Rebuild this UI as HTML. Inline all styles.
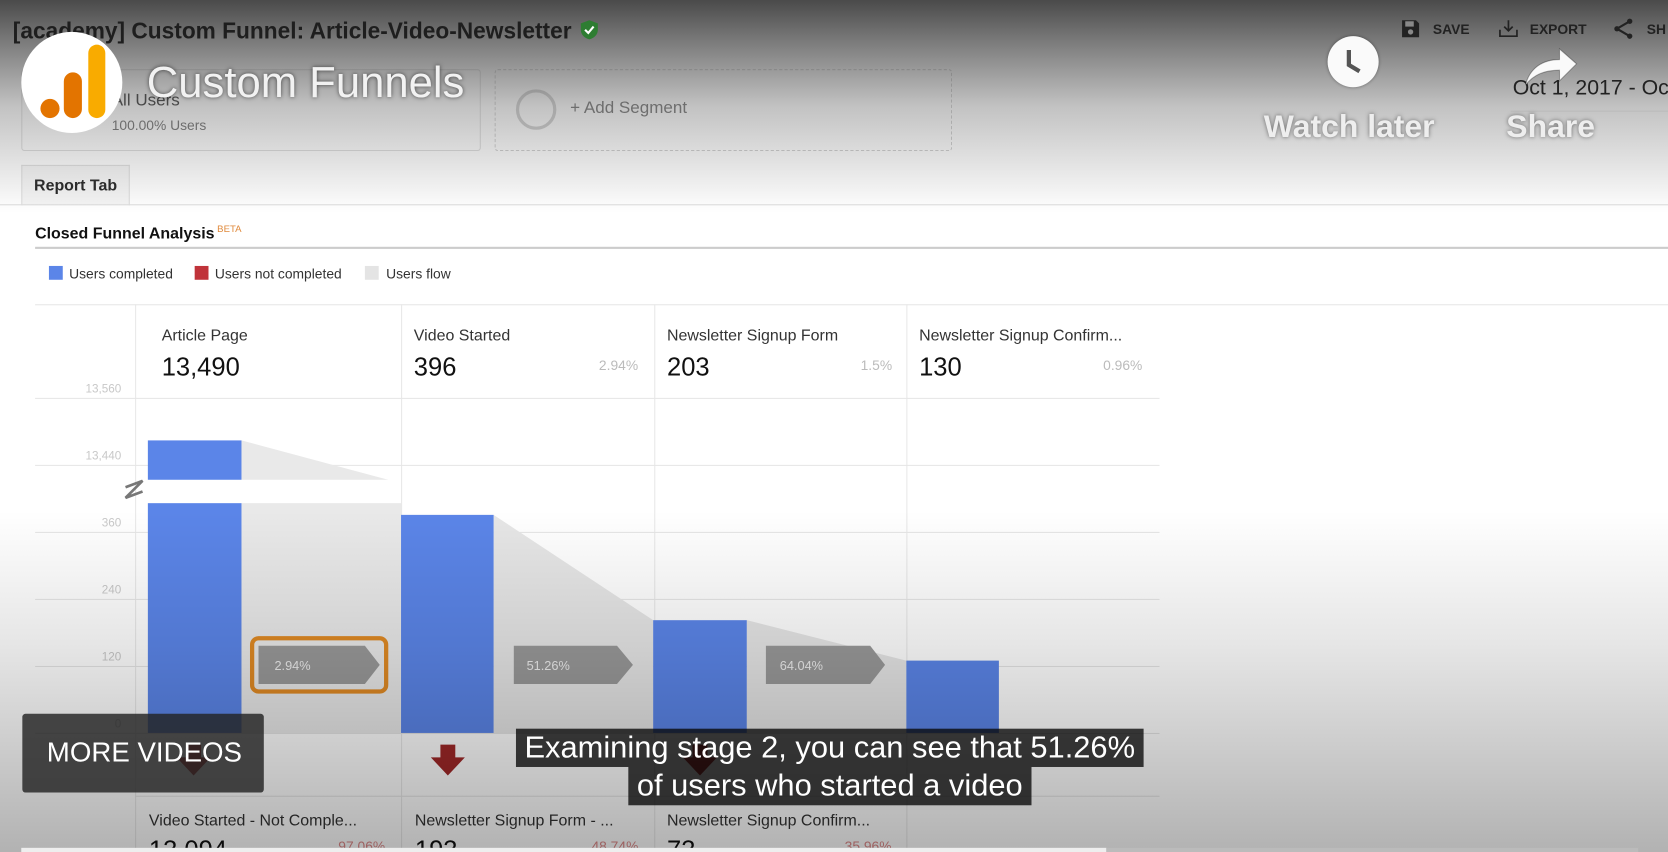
<!DOCTYPE html>
<html><head><meta charset="utf-8"><style>
html,body{margin:0;padding:0;width:1668px;height:852px;overflow:hidden;background:#fff;font-family:"Liberation Sans",sans-serif}
#w{position:absolute;left:0;top:0;width:1568px;height:801px;transform:scale(1.06378);transform-origin:0 0;background:#fff;overflow:hidden}
.a{position:absolute;white-space:nowrap}
.hl{position:absolute;height:1px;background:#e6e6e6}
.vl{position:absolute;width:1px;background:#e8e8e8}
.bar{position:absolute;background:#5b85e8}
.yl{position:absolute;width:80px;text-align:right;font-size:11px;color:#c8c8c8;left:34px}
.hn{font-size:15px;color:#333}
.hv{font-size:24px;color:#111}
.hp{font-size:13px;color:#bbb}
.cap{position:absolute;background:rgba(8,8,8,.78);color:#fff;font-size:29px;line-height:36px;padding:0 8px;white-space:nowrap;transform:translateX(-50%)}
</style></head><body><div id="w">
<div class="a" style="left:20px;top:65px;width:430px;height:75px;border:1px solid #ddd;border-radius:3px"></div>
<div class="a" style="left:105px;top:86px;font-size:16px;color:#222">All Users</div>
<div class="a" style="left:105px;top:110px;font-size:13px;color:#666">100.00% Users</div>
<div class="a" style="left:465px;top:65px;width:428px;height:75px;border:1px dashed #ccc;border-radius:3px"></div>
<div class="a" style="left:485px;top:84px;width:32px;height:32px;border:3px solid #ccc;border-radius:50%"></div>
<div class="a" style="left:536px;top:93px;font-size:16px;color:#666">+ Add Segment</div>
<div class="a" style="left:20px;top:155px;width:100px;height:37px;border:1px solid #ddd;border-bottom:none;background:#f5f5f5"></div>
<div class="a" style="left:32px;top:166px;font-size:15px;font-weight:bold;color:#222">Report Tab</div>
<div class="hl" style="left:0;top:192px;width:1568px;background:#ddd"></div>
<div class="a" style="left:33px;top:210px;font-size:15px;font-weight:bold;color:#111">Closed Funnel Analysis<sup style="font-size:9px;color:#e08a3c;font-weight:normal"> BETA</sup></div>
<div class="hl" style="left:33px;top:232px;width:1535px;height:2px;background:#ccc"></div>
<div class="a" style="left:46px;top:250px;width:13px;height:13px;background:#5b85e8"></div>
<div class="a" style="left:65px;top:250px;font-size:13px;color:#333">Users completed</div>
<div class="a" style="left:183px;top:250px;width:13px;height:13px;background:#c0333a"></div>
<div class="a" style="left:202px;top:250px;font-size:13px;color:#333">Users not completed</div>
<div class="a" style="left:343px;top:250px;width:13px;height:13px;background:#e4e4e4"></div>
<div class="a" style="left:363px;top:250px;font-size:13px;color:#333">Users flow</div>
<div class="hl" style="left:33px;top:286px;width:1535px"></div>
<div class="vl" style="left:127px;top:286px;height:515px"></div>
<div class="vl" style="left:377px;top:286px;height:515px"></div>
<div class="vl" style="left:615px;top:286px;height:515px"></div>
<div class="vl" style="left:852px;top:286px;height:515px"></div>
<div class="hl" style="left:33px;top:374px;width:1057px"></div>
<div class="hl" style="left:33px;top:437px;width:1057px"></div>
<div class="hl" style="left:33px;top:500px;width:1057px"></div>
<div class="hl" style="left:33px;top:563px;width:1057px"></div>
<div class="hl" style="left:33px;top:626px;width:1057px"></div>
<div class="hl" style="left:33px;top:689px;width:1057px"></div>
<div class="hl" style="left:127px;top:748px;width:963px"></div>
<div class="yl" style="top:360px">13,560</div>
<div class="yl" style="top:423px">13,440</div>
<div class="yl" style="top:486px">360</div>
<div class="yl" style="top:549px">240</div>
<div class="yl" style="top:612px">120</div>
<div class="yl" style="top:675px">0</div>
<div class="a hn" style="left:152px;top:307px">Article Page</div>
<div class="a hv" style="left:152px;top:332px">13,490</div>
<div class="a hn" style="left:389px;top:307px">Video Started</div>
<div class="a hv" style="left:389px;top:332px">396</div>
<div class="a hp" style="left:563px;top:336px">2.94%</div>
<div class="a hn" style="left:627px;top:307px">Newsletter Signup Form</div>
<div class="a hv" style="left:627px;top:332px">203</div>
<div class="a hp" style="left:809px;top:336px">1.5%</div>
<div class="a hn" style="left:864px;top:307px">Newsletter Signup Confirm...</div>
<div class="a hv" style="left:864px;top:332px">130</div>
<div class="a hp" style="left:1037px;top:336px">0.96%</div>
<svg class="a" style="left:0;top:0" width="1568" height="801">
<polygon points="227,414 365,451 227,451" fill="#e9e9e9"/>
<polygon points="227,473 377,473 377,689 227,689" fill="#e9e9e9"/>
<polygon points="464,484 614,583 614,689 464,689" fill="#e6e6e6"/>
<polygon points="702,583 852,621 852,689 702,689" fill="#e6e6e6"/>
<polyline points="118,458 134,452 118,468 134,462" fill="none" stroke="#777" stroke-width="2.5"/>
<rect x="237" y="600" width="126" height="50" rx="6" fill="none" stroke="#e08a24" stroke-width="4"/>
<polygon points="243,607 343,607 357,625 343,643 243,643" fill="#999"/>
<polygon points="483,607 580,607 595,625 580,643 483,643" fill="#999"/>
<polygon points="720,607 818,607 832,625 818,643 720,643" fill="#999"/>
<text x="258" y="630" font-size="12" fill="#eee" font-family="Liberation Sans">2.94%</text>
<text x="495" y="630" font-size="12" fill="#eee" font-family="Liberation Sans">51.26%</text>
<text x="733" y="630" font-size="12" fill="#eee" font-family="Liberation Sans">64.04%</text>
<polygon points="175,700 189,700 189,712 198,712 182,729 166,712 175,712" fill="#a02828"/>
<polygon points="414,700 428,700 428,712 437,712 421,729 405,712 414,712" fill="#a02828"/>
<polygon points="651,700 665,700 665,712 674,712 658,729 642,712 651,712" fill="#a02828"/>
</svg>
<div class="bar" style="left:139px;top:414px;width:88px;height:37px"></div>
<div class="bar" style="left:139px;top:473px;width:88px;height:216px"></div>
<div class="bar" style="left:377px;top:484px;width:87px;height:205px"></div>
<div class="bar" style="left:614px;top:583px;width:88px;height:106px"></div>
<div class="bar" style="left:852px;top:621px;width:87px;height:68px"></div>
<div class="a hn" style="left:140px;top:763px">Video Started - Not Comple...</div>
<div class="a hn" style="left:390px;top:763px">Newsletter Signup Form - ...</div>
<div class="a hn" style="left:627px;top:763px">Newsletter Signup Confirm...</div>
<div class="a hv" style="left:140px;top:786px">13,094</div><div class="a hp" style="left:318px;top:788px;color:#d88">97.06%</div>
<div class="a hv" style="left:390px;top:786px">193</div><div class="a hp" style="left:556px;top:788px;color:#d88">48.74%</div>
<div class="a hv" style="left:627px;top:786px">73</div><div class="a hp" style="left:794px;top:788px;color:#d88">35.96%</div>
<div class="a" style="left:0;top:0;width:1568px;height:200px;background:linear-gradient(#4a4a4a 0%,rgba(80,80,80,.75) 20%,rgba(120,120,120,.45) 50%,rgba(255,255,255,0) 100%)"></div>
<div class="a" style="left:0;top:480px;width:1568px;height:321px;background:linear-gradient(rgba(0,0,0,0),rgba(0,0,0,.1) 40%,rgba(0,0,0,.3))"></div>
<div class="a" style="left:12px;top:16px;font-size:22px;font-weight:bold;color:#1e1e1e;transform:scaleX(0.97);transform-origin:0 0">[academy] Custom Funnel: Article-Video-Newsletter</div>
<svg class="a" style="left:545px;top:18px" width="18" height="20"><path d="M9 1 L17 4 V10 C17 15 13 18 9 19 C5 18 1 15 1 10 V4Z" fill="#2e7d32"/><path d="M5 10 L8 13 L13 7" stroke="#fff" stroke-width="2" fill="none"/></svg>
<svg class="a" style="left:1317px;top:18px" width="18" height="18"><path d="M1 1H14L17 4V17H1Z" fill="#222"/><rect x="4" y="2" width="8" height="5" fill="#888"/><circle cx="9" cy="12" r="2.5" fill="#888"/></svg>
<div class="a" style="left:1347px;top:20px;font-size:13px;font-weight:bold;color:#222">SAVE</div>
<svg class="a" style="left:1408px;top:18px" width="20" height="18"><path d="M10 1V11M6 7L10 11L14 7M2 10V16H18V10" stroke="#222" stroke-width="1.6" fill="none"/></svg>
<div class="a" style="left:1438px;top:20px;font-size:13px;font-weight:bold;color:#222">EXPORT</div>
<svg class="a" style="left:1516px;top:17px" width="20" height="20"><path d="M16 3L4 10L16 17" stroke="#222" stroke-width="2" fill="none"/><circle cx="16" cy="3" r="2.5" fill="#222"/><circle cx="4" cy="10" r="2.5" fill="#222"/><circle cx="16" cy="17" r="2.5" fill="#222"/></svg>
<div class="a" style="left:1548px;top:20px;font-size:13px;font-weight:bold;color:#222">SH</div>
<div class="a" style="left:1422px;top:72px;font-size:20px;color:#222">Oct 1, 2017 - Oct</div>
<div class="hl" style="left:1420px;top:104px;width:148px;background:#bbb"></div>
<div class="a" style="left:20px;top:30px;width:95px;height:95px;border-radius:50%;background:#fff"></div>
<svg class="a" style="left:20px;top:30px" width="95" height="95"><circle cx="27" cy="72" r="9" fill="#e37400"/><rect x="40" y="38" width="17" height="43" rx="8.5" fill="#e37400"/><rect x="63" y="12" width="16" height="69" rx="8" fill="#f9ab00"/></svg>
<div class="a" style="left:138px;top:54px;font-size:41px;color:#f2f2f2;text-shadow:0 0 4px rgba(0,0,0,.6)">Custom Funnels</div>
<div class="a" style="left:1248px;top:34px;width:48px;height:48px;border-radius:50%;background:#fafafa;box-shadow:0 0 3px rgba(0,0,0,.4)"></div>
<svg class="a" style="left:1248px;top:34px" width="48" height="48"><path d="M20 13V27L30 33" stroke="#555" stroke-width="4" fill="none"/></svg>
<div class="a" style="left:1188px;top:103px;font-size:30px;font-weight:bold;color:#eee;text-shadow:0 0 4px rgba(0,0,0,.5)">Watch later</div>
<svg class="a" style="left:1430px;top:38px" width="60" height="44"><path d="M4 42 C8 26 20 18 36 18 V8 L52 22 L36 38 V28 C22 28 12 32 4 42Z" fill="#fafafa" stroke="rgba(0,0,0,.3)" stroke-width="1"/></svg>
<div class="a" style="left:1416px;top:103px;font-size:30px;font-weight:bold;color:#eee;text-shadow:0 0 4px rgba(0,0,0,.5)">Share</div>
<div class="a" style="left:21px;top:671px;width:227px;height:74px;background:rgba(35,35,35,.82);border-radius:3px"></div>
<div class="a" style="left:44px;top:692px;font-size:26px;color:#fff">MORE VIDEOS</div>
<div class="cap" style="left:780px;top:685px">Examining stage 2, you can see that 51.26%</div>
<div class="cap" style="left:780px;top:721px">of users who started a video</div>
<div class="a" style="left:20px;top:797px;width:1020px;height:4px;background:#eee"></div>
<div class="a" style="left:1040px;top:797px;width:500px;height:4px;background:#bbb"></div>
</div></body></html>
